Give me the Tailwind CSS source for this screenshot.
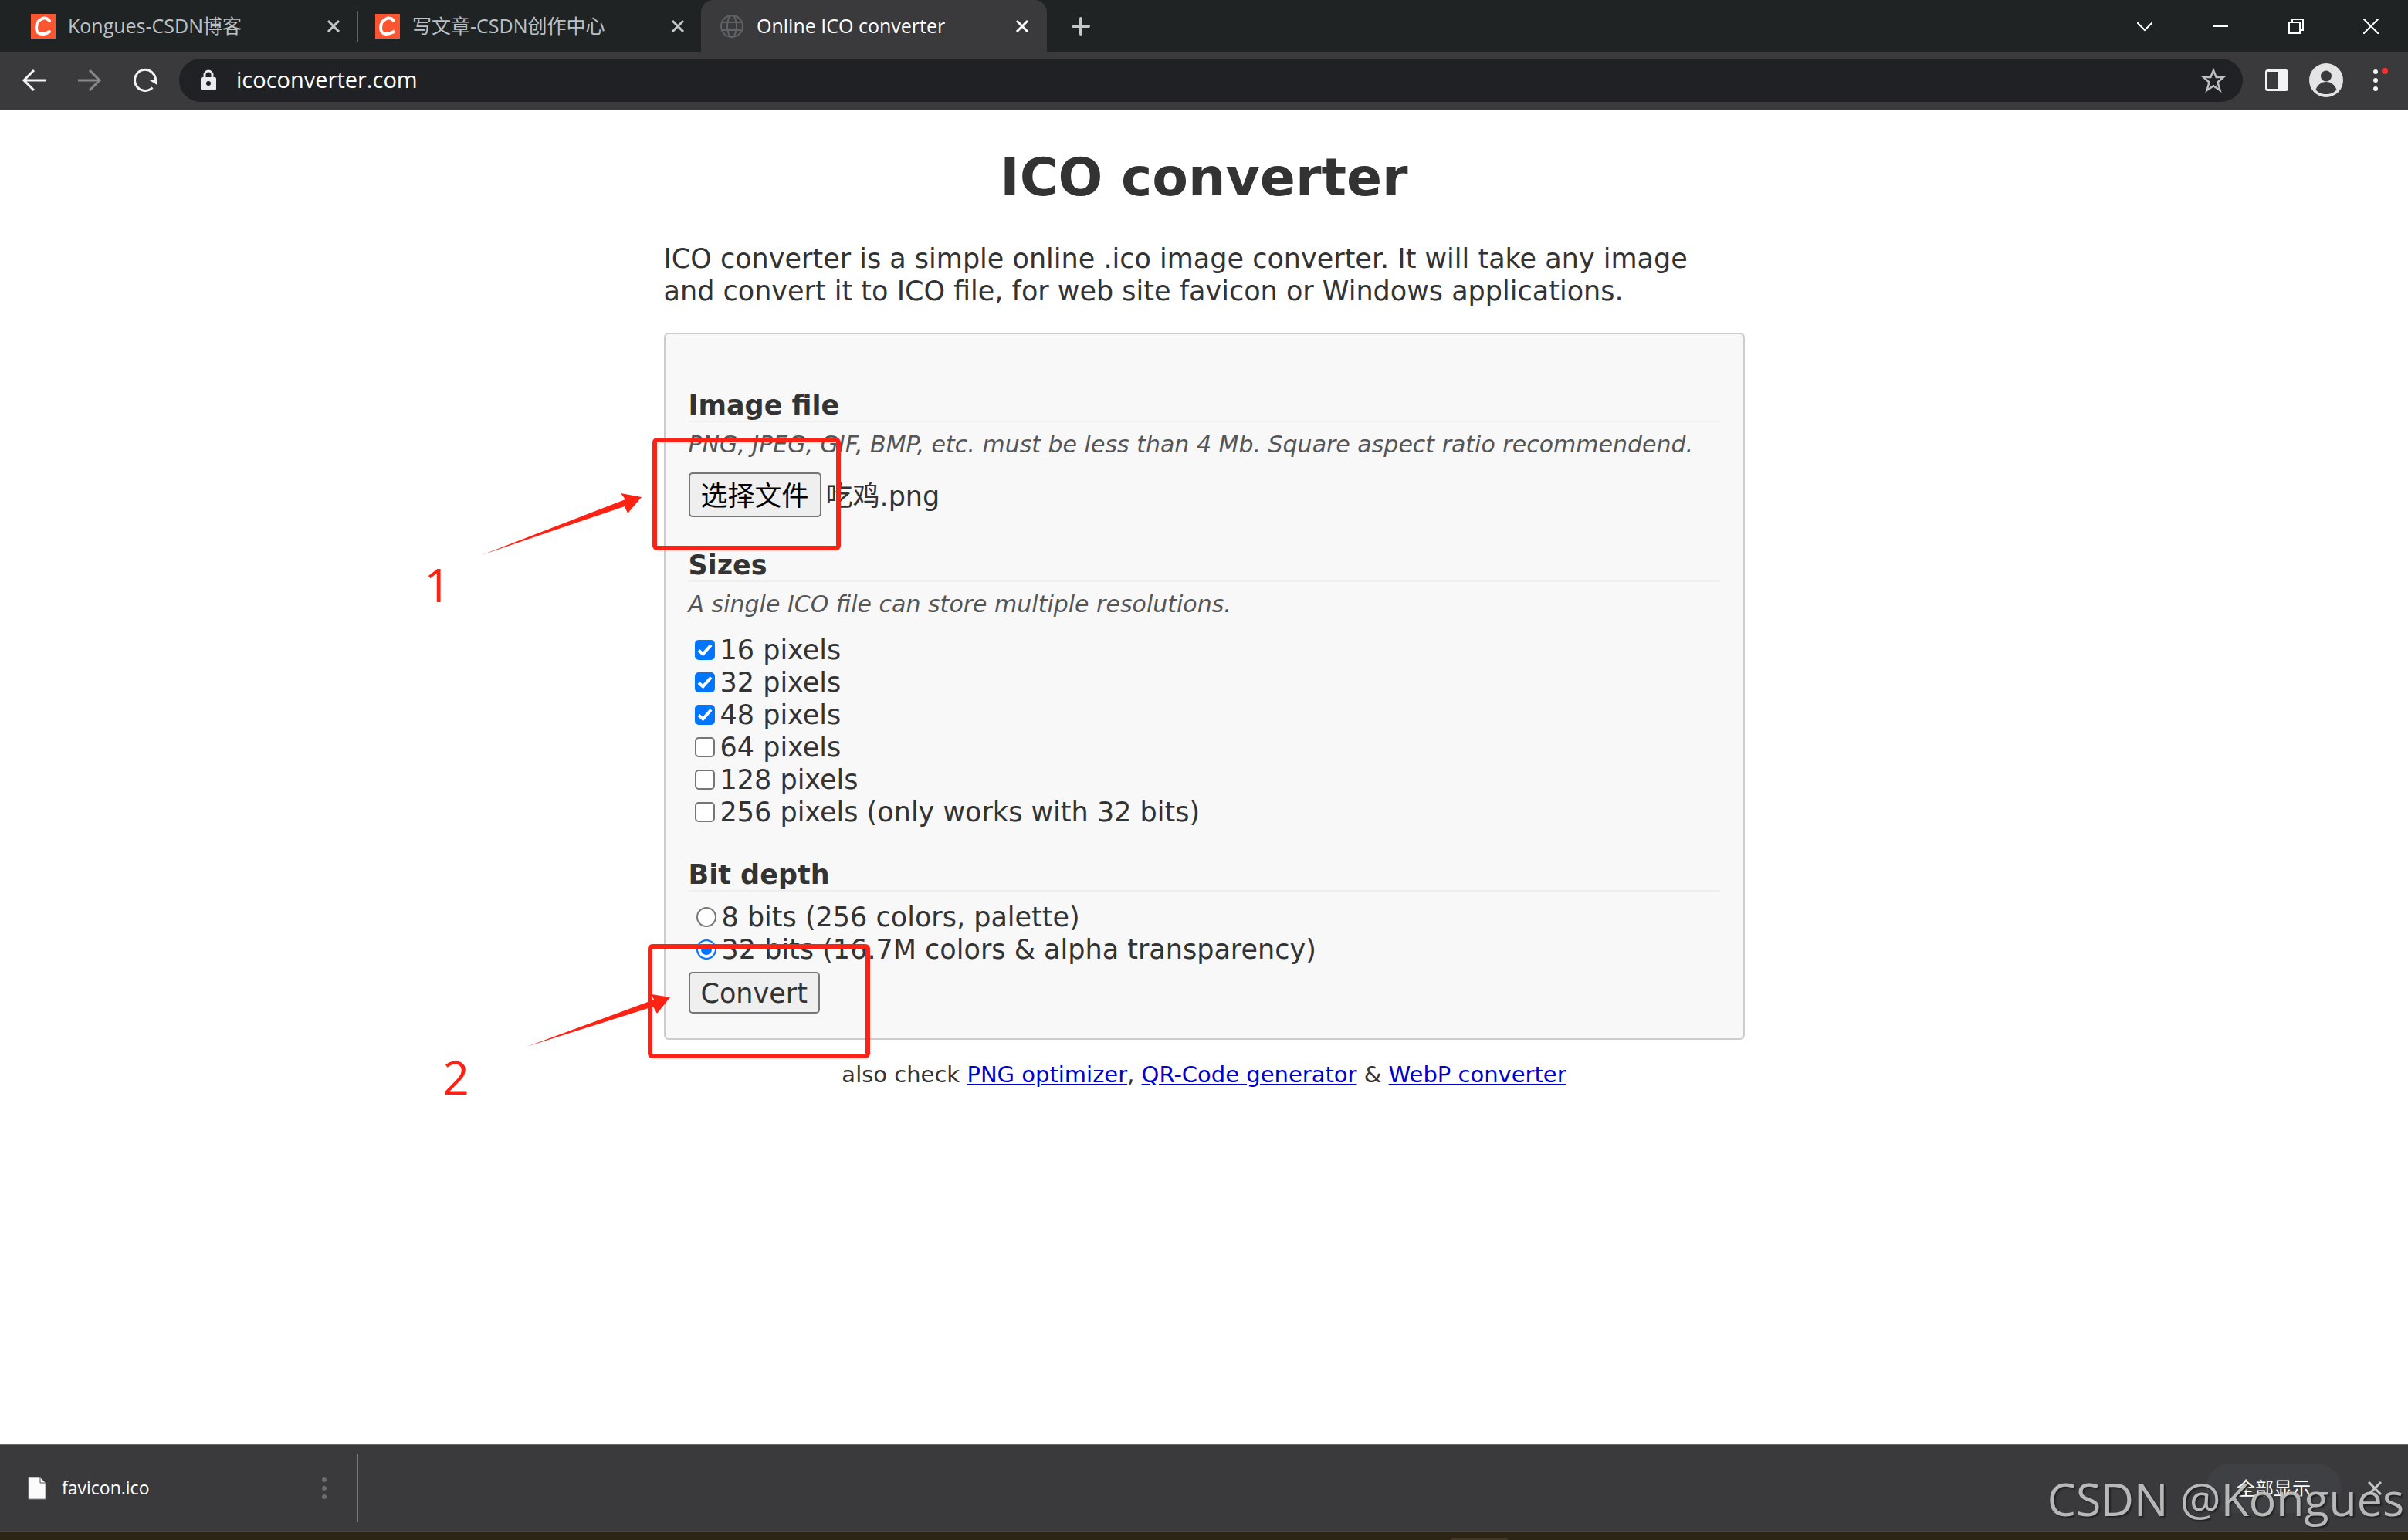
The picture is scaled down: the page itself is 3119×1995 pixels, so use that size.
<!DOCTYPE html>
<html lang="en">

<head>
    <meta charset="UTF-8">
    <meta name="viewport" content="width=device-width, initial-scale=1.0">
    <title>Online ICO converter</title>
    <script src="https://cdn.jsdelivr.net/npm/@tailwindcss/browser@4"></script>
</head>

<body class="flex min-h-screen flex-col bg-white font-['Open_Sans','Noto_Sans_CJK_SC',sans-serif]">

<!-- Browser chrome -->
<header>
    <div class="flex h-[68px] items-center justify-between bg-[#1f2323] text-[25px] text-[#bdc1c6]">
        <div class="flex h-full pl-4">
            <div class="flex h-full w-[446px] items-center gap-4 pr-[21px] pl-6">
                <svg class="size-8 shrink-0" viewBox="0 0 32 32"><rect width="32" height="32" fill="#fc5531"/><path d="M24 9c-2-3-6-4.500-9-3C10 8 7 13 7 18c0 5 3 8 7 8 4 0 7-1 10-3" fill="none" stroke="#fff" stroke-width="4" stroke-linecap="round"/></svg>
                <span class="grow truncate">Kongues-CSDN博客</span>
                <button aria-label="Close tab" class="shrink-0"><svg class="size-[18px]" viewBox="0 0 18 18"><path d="M2 2l14 14M16 2L2 16" fill="none" stroke="#c4c7ca" stroke-width="3"/></svg></button>
            </div>
            <div class="flex h-full items-center"><div class="-mr-[2px] h-10 w-[2px] bg-[#5f6368]"></div></div>
            <div class="flex h-full w-[446px] items-center gap-4 pr-[21px] pl-6">
                <svg class="size-8 shrink-0" viewBox="0 0 32 32"><rect width="32" height="32" fill="#fc5531"/><path d="M24 9c-2-3-6-4.500-9-3C10 8 7 13 7 18c0 5 3 8 7 8 4 0 7-1 10-3" fill="none" stroke="#fff" stroke-width="4" stroke-linecap="round"/></svg>
                <span class="grow truncate">写文章-CSDN创作中心</span>
                <button aria-label="Close tab" class="shrink-0"><svg class="size-[18px]" viewBox="0 0 18 18"><path d="M2 2l14 14M16 2L2 16" fill="none" stroke="#c4c7ca" stroke-width="3"/></svg></button>
            </div>
            <div class="flex h-full w-[448px] items-center gap-4 rounded-t-2xl bg-[#3a3a3c] pr-[23px] pl-6 text-white">
                <svg class="size-8 shrink-0" viewBox="0 0 32 32" fill="none" stroke="#5f6368" stroke-width="2"><circle cx="16" cy="16" r="14"/><ellipse cx="16" cy="16" rx="6" ry="14"/><path d="M3.500 11h25M3.500 21h25"/></svg>
                <span class="grow truncate">Online ICO converter</span>
                <button aria-label="Close tab" class="shrink-0"><svg class="size-[18px]" viewBox="0 0 18 18"><path d="M2 2l14 14M16 2L2 16" fill="none" stroke="#fff" stroke-width="3"/></svg></button>
            </div>
            <button aria-label="New tab" class="ml-8"><svg class="size-6" viewBox="0 0 24 24"><path d="M12 2v20M2 12h20" fill="none" stroke="#c4c7ca" stroke-width="4" stroke-linecap="round"/></svg></button>
        </div>
        <div class="flex h-full">
            <button aria-label="Search tabs" class="flex w-[98px] items-center justify-center"><svg class="size-5" viewBox="0 0 20 20"><path d="M0 5l10 10L20 5" fill="none" stroke="#fff" stroke-width="2"/></svg></button>
            <button aria-label="Minimize" class="flex w-[98px] items-center justify-center"><svg class="size-5" viewBox="0 0 20 20"><path d="M0 10h20" stroke="#fff" stroke-width="2"/></svg></button>
            <button aria-label="Restore" class="flex w-[98px] items-center justify-center"><svg class="size-5" viewBox="0 0 20 20"><path d="M1 5h14v14H1zM5 5V1h14v14h-4" fill="none" stroke="#fff" stroke-width="2"/></svg></button>
            <button aria-label="Close" class="flex w-24 items-center justify-center"><svg class="size-5" viewBox="0 0 20 20"><path d="M0 0l20 20M20 0L0 20" stroke="#fff" stroke-width="2"/></svg></button>
        </div>
    </div>

    <div class="flex h-[74px] items-center bg-[#3a3a3c] pr-[26px] pb-[2px] pl-7">
        <button aria-label="Back"><svg class="size-8" viewBox="0 0 32 32"><path d="M31 16H4M16 3L3 16l13 13" fill="none" stroke="#f1f3f4" stroke-width="3"/></svg></button>
        <button aria-label="Forward" class="ml-10"><svg class="size-8" viewBox="0 0 32 32"><path d="M1 16h27M16 3l13 13-13 13" fill="none" stroke="#87888a" stroke-width="3"/></svg></button>
        <button aria-label="Reload" class="ml-10"><svg class="size-8" viewBox="0 0 32 32"><path d="M25.500 25.500A13.500 13.500 0 1 1 29.500 17" fill="none" stroke="#f1f3f4" stroke-width="3"/><path d="M21 15.500h10.500V22z" fill="#f1f3f4"/></svg></button>
        <div class="ml-7 flex h-14 grow items-center rounded-full bg-[#202124] pr-[22px] pl-7">
            <svg class="h-7 w-5 shrink-0" viewBox="0 0 20 28"><path d="M5 12V7a5 5 0 0 1 10 0v5" fill="none" stroke="#e8eaed" stroke-width="3"/><rect y="10" width="20" height="17" rx="2" fill="#e8eaed"/><circle cx="10" cy="18" r="3" fill="#202124"/></svg>
            <input type="text" aria-label="Address" value="icoconverter.com" class="ml-[26px] min-w-0 grow bg-transparent pb-[2px] text-[29px] text-white outline-none">
            <button aria-label="Bookmark this tab"><svg class="size-8" viewBox="0 0 32 32"><path d="M16 3l3.600 9H29l-7.500 6.500L24.500 29 16 23.200 7.500 29l3-10.500L3 12h9.400z" fill="none" stroke="#bcbdbf" stroke-width="2.500"/></svg></button>
        </div>
        <button aria-label="Side panel" class="ml-7"><svg class="size-8" viewBox="0 0 32 32"><rect x="2.500" y="3.500" width="27" height="25" rx="2" fill="none" stroke="#f1f3f4" stroke-width="3"/><path d="M18 3h12v26H18z" fill="#f1f3f4"/></svg></button>
        <button aria-label="Profile" class="ml-[26px]"><svg class="size-11" viewBox="0 0 44 44"><circle cx="22" cy="22" r="22" fill="#e4e4e4"/><circle cx="22" cy="16.500" r="7" fill="#3a3a3c"/><path d="M8.500 34c3-7 8-10 13.500-10s10.500 3 13.500 10c-3 4-8 6-13.500 6S11.500 38 8.500 34z" fill="#3a3a3c"/></svg></button>
        <button aria-label="Menu" class="ml-7"><svg class="h-8 w-[30px]" viewBox="0 0 30 32"><g fill="#f1f3f4"><circle cx="14" cy="5" r="3"/><circle cx="14" cy="16" r="3"/><circle cx="14" cy="27" r="3"/></g><circle cx="26" cy="4" r="4" fill="#f5302e"/></svg></button>
    </div>
</header>

<!-- Page -->
<main class="grow pt-[46px] font-['DejaVu_Sans','Noto_Sans_CJK_SC',sans-serif] text-[35px]/[42px] text-[#333]">
    <div class="mx-auto max-w-[1400px]">
        <h1 class="text-center text-[68px]/[84px] font-bold">ICO converter</h1>
        <p class="mt-[42px]">ICO converter is a simple online .ico image converter. It will take any image and convert it to ICO file, for web site favicon or Windows applications.</p>

        <form class="relative mt-[33px] rounded-md border-2 border-[#ccc] bg-[#f8f8f8] px-[30px] pt-[72px] pb-8">
            <h2 class="border-b-2 border-[#eee] leading-10 font-bold">Image file</h2>
            <p class="mt-[11px] text-[30px]/[36px] text-[#555] italic">PNG, JPEG, GIF, BMP, etc. must be less than 4 Mb. Square aspect ratio recommendend.</p>
            <div class="mt-[18px] flex items-center gap-[6px]">
                <input type="file" id="image" aria-label="Image file" class="sr-only">
                <button type="button" onclick="document.getElementById('image').click()" class="h-[58px] rounded-[5px] border-2 border-[#767676] bg-[#efefef] px-[14px] pt-1 text-black">选择文件</button>
                <span id="filename" class="pt-1">吃鸡.png</span>
            </div>

            <h2 class="mt-[42px] border-b-2 border-[#eee] leading-10 font-bold">Sizes</h2>
            <p class="mt-[11px] text-[30px]/[36px] text-[#555] italic">A single ICO file can store multiple resolutions.</p>
            <div class="mt-5 flex flex-col items-start pl-2">
                <label class="flex items-center gap-[7px]"><span class="relative grid"><input type="checkbox" checked class="peer size-[26px] appearance-none rounded-[5px] border-2 border-[#767676] bg-white checked:border-[#0075ff] checked:bg-[#0075ff]"><svg class="pointer-events-none invisible absolute inset-0 size-[26px] peer-checked:visible" viewBox="0 0 26 26"><path d="M5 13.500l5.500 5L21 6.500" fill="none" stroke="#fff" stroke-width="4"/></svg></span>16 pixels</label>
                <label class="flex items-center gap-[7px]"><span class="relative grid"><input type="checkbox" checked class="peer size-[26px] appearance-none rounded-[5px] border-2 border-[#767676] bg-white checked:border-[#0075ff] checked:bg-[#0075ff]"><svg class="pointer-events-none invisible absolute inset-0 size-[26px] peer-checked:visible" viewBox="0 0 26 26"><path d="M5 13.500l5.500 5L21 6.500" fill="none" stroke="#fff" stroke-width="4"/></svg></span>32 pixels</label>
                <label class="flex items-center gap-[7px]"><span class="relative grid"><input type="checkbox" checked class="peer size-[26px] appearance-none rounded-[5px] border-2 border-[#767676] bg-white checked:border-[#0075ff] checked:bg-[#0075ff]"><svg class="pointer-events-none invisible absolute inset-0 size-[26px] peer-checked:visible" viewBox="0 0 26 26"><path d="M5 13.500l5.500 5L21 6.500" fill="none" stroke="#fff" stroke-width="4"/></svg></span>48 pixels</label>
                <label class="flex items-center gap-[7px]"><span class="relative grid"><input type="checkbox" class="peer size-[26px] appearance-none rounded-[5px] border-2 border-[#767676] bg-white checked:border-[#0075ff] checked:bg-[#0075ff]"><svg class="pointer-events-none invisible absolute inset-0 size-[26px] peer-checked:visible" viewBox="0 0 26 26"><path d="M5 13.500l5.500 5L21 6.500" fill="none" stroke="#fff" stroke-width="4"/></svg></span>64 pixels</label>
                <label class="flex items-center gap-[7px]"><span class="relative grid"><input type="checkbox" class="peer size-[26px] appearance-none rounded-[5px] border-2 border-[#767676] bg-white checked:border-[#0075ff] checked:bg-[#0075ff]"><svg class="pointer-events-none invisible absolute inset-0 size-[26px] peer-checked:visible" viewBox="0 0 26 26"><path d="M5 13.500l5.500 5L21 6.500" fill="none" stroke="#fff" stroke-width="4"/></svg></span>128 pixels</label>
                <label class="flex items-center gap-[7px]"><span class="relative grid"><input type="checkbox" class="peer size-[26px] appearance-none rounded-[5px] border-2 border-[#767676] bg-white checked:border-[#0075ff] checked:bg-[#0075ff]"><svg class="pointer-events-none invisible absolute inset-0 size-[26px] peer-checked:visible" viewBox="0 0 26 26"><path d="M5 13.500l5.500 5L21 6.500" fill="none" stroke="#fff" stroke-width="4"/></svg></span>256 pixels (only works with 32 bits)</label>
            </div>

            <h2 class="mt-10 border-b-2 border-[#eee] leading-10 font-bold">Bit depth</h2>
            <div class="mt-3 flex flex-col items-start pl-[10px]">
                <label class="flex items-center gap-[7px]"><input type="radio" name="bpp" class="size-[26px] appearance-none rounded-full border-2 border-[#767676] bg-white checked:border-[#0075ff] checked:bg-[#0075ff] checked:shadow-[inset_0_0_0_4px_#fff]">8 bits (256 colors, palette)</label>
                <label class="flex items-center gap-[7px]"><input type="radio" name="bpp" checked class="size-[26px] appearance-none rounded-full border-2 border-[#767676] bg-white checked:border-[#0075ff] checked:bg-[#0075ff] checked:shadow-[inset_0_0_0_4px_#fff]">32 bits (16.7M colors &amp; alpha transparency)</label>
            </div>
            <button type="button" class="mt-2 block h-[54px] rounded-[5px] border-2 border-[#767676] bg-[#efefef] px-[14px] pt-[2px]">Convert</button>

            <!-- Step markers drawn over the form -->
            <div class="pointer-events-none absolute top-[134px] -left-[17px] h-[146px] w-[244px] rounded-md border-6 border-[#fe2214]"></div>
            <div class="pointer-events-none absolute top-[790px] -left-[23px] h-[148px] w-[288px] rounded-md border-6 border-[#fe2214]"></div>
            <svg class="pointer-events-none absolute top-[200px] -left-[242px] h-[90px] w-[220px]" viewBox="0 0 220 90"><path d="M4 86L190 14 184 6l27 5-18 21-4-9z" fill="#fe2214"/></svg>
            <svg class="pointer-events-none absolute top-[840px] -left-[184px] h-[90px] w-[200px]" viewBox="0 0 200 90"><path d="M4 83L169 22 166 15l24 4-17 21-5-9z" fill="#fe2214"/></svg>
            <span class="absolute top-[292px] -left-[312px] font-['Open_Sans',sans-serif] text-[60px]/[64px] text-[#fe2214]">1</span>
            <span class="absolute top-[930px] -left-[288px] font-['Open_Sans',sans-serif] text-[60px]/[64px] text-[#fe2214]">2</span>
        </form>

        <p class="mt-[27px] text-center text-[29px]/[36px]">also check <a href="#" class="text-[#0000cc] underline">PNG optimizer</a>, <a href="#" class="text-[#0000cc] underline">QR-Code generator</a> &amp; <a href="#" class="text-[#0000cc] underline">WebP converter</a></p>
    </div>
</main>

<!-- Downloads bar -->
<footer class="relative">
    <div class="flex h-[115px] items-center justify-between border-y-2 border-t-[#6a6b6c] border-b-[#4a4535] bg-[#3a3a3c] pr-[34px] text-white">
        <div class="flex h-[88px] w-[464px] items-center border-r-2 border-[#77787a] pr-[34px] pl-9">
            <svg class="h-[30px] w-6" viewBox="0 0 24 30"><path d="M1 1h15l7 7v21H1z" fill="#fbfbfb" stroke="#8a8a8a"/><path d="M16 1v7h7" fill="none" stroke="#555"/></svg>
            <span class="ml-5 grow text-[23px]">favicon.ico</span>
            <button aria-label="Download options"><svg class="h-8 w-4" viewBox="0 0 16 32" fill="#6c6c6e"><circle cx="8" cy="5" r="3"/><circle cx="8" cy="16" r="3"/><circle cx="8" cy="27" r="3"/></svg></button>
        </div>
        <div class="flex items-center">
            <button class="h-16 w-[176px] rounded-full bg-[#3f4044] text-2xl">全部显示</button>
            <button aria-label="Close downloads bar" class="ml-[34px]"><svg class="size-[18px]" viewBox="0 0 18 18"><path d="M1 1l16 16M17 1L1 17" fill="none" stroke="#c4c7ca" stroke-width="3"/></svg></button>
        </div>
    </div>
    <div class="flex h-[10px] items-end bg-[#2c2414] pl-[60%]">
        <div class="ml-2 h-[3px] w-[74px] rounded-t-sm bg-[#433828]"></div>
    </div>
    <div class="pointer-events-none absolute right-[5px] bottom-[14px] text-[59px]/[80px] text-[#c8c8c8]/90 [text-shadow:2px_2px_2px_#222]">CSDN @Kongues</div>
</footer>

</body>

</html>
